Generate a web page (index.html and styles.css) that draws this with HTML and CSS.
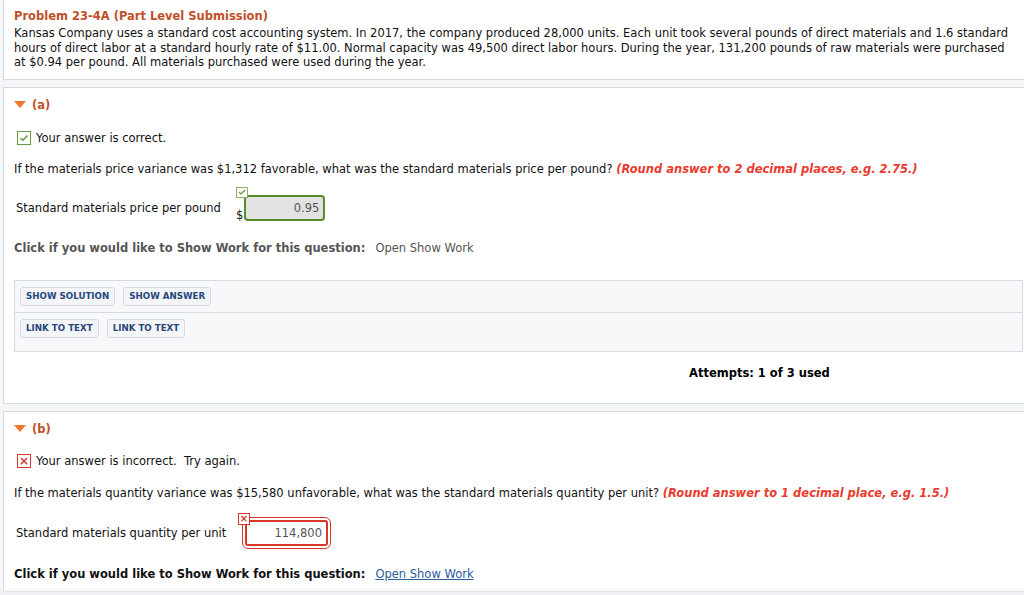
FILE: index.html
```html
<!DOCTYPE html>
<html lang="en">
<head>
    <meta charset="UTF-8">
    <title>Problem 23-4A</title>
    <link rel="stylesheet" href="styles.css">
</head>
<body>
    <div class="problem">
        <h2 class="problem-title">Problem 23-4A (Part Level Submission)</h2>
        <p class="problem-text">Kansas Company uses a standard cost accounting system. In 2017, the company produced 28,000 units. Each unit took several pounds of direct materials and 1.6 standard hours of direct labor at a standard hourly rate of $11.00. Normal capacity was 49,500 direct labor hours. During the year, 131,200 pounds of raw materials were purchased at $0.94 per pound. All materials purchased were used during the year.</p>
    </div>

    <div class="part">
        <div class="part-head"><span class="arrow"></span>(a)</div>
        <div class="status"><span class="mark mark-ok"><svg width="10" height="8" viewBox="0 0 10 8"><path d="M1.5 4.2 L3.8 6.3 L8.5 1.5" fill="none" stroke="#5c8f2e" stroke-width="1.3"/></svg></span>Your answer is correct.</div>
        <p class="question">If the materials price variance was $1,312 favorable, what was the standard materials price per pound? <em class="hint">(Round answer to 2 decimal places, e.g. 2.75.)</em></p>
        <div class="answer-row">
            <span class="answer-label">Standard materials price per pound</span>
            <span class="field">
                <span class="badge badge-ok"><svg width="8" height="6" viewBox="0 0 8 6"><path d="M1 3.2 L3 5 L7 1" fill="none" stroke="#5c8f2e" stroke-width="1.1"/></svg></span>
                <span class="dollar">$</span><span class="input input-ok">0.95</span>
            </span>
        </div>
        <div class="show-work muted">Click if you would like to Show Work for this question: <span class="work-link">Open Show Work</span></div>
        <div class="tools">
            <div class="tool-row">
                <span class="tool-btn">Show Solution</span>
                <span class="tool-btn">Show Answer</span>
            </div>
            <div class="tool-row tool-row-last">
                <span class="tool-btn">Link to Text</span>
                <span class="tool-btn">Link to Text</span>
            </div>
        </div>
        <div class="attempts">Attempts: 1 of 3 used</div>
    </div>

    <div class="part part-b">
        <div class="part-head"><span class="arrow"></span>(b)</div>
        <div class="status"><span class="mark mark-bad">&times;</span>Your answer is incorrect.&nbsp; Try again.</div>
        <p class="question">If the materials quantity variance was $15,580 unfavorable, what was the standard materials quantity per unit? <em class="hint">(Round answer to 1 decimal place, e.g. 1.5.)</em></p>
        <div class="answer-row answer-row-b">
            <span class="answer-label">Standard materials quantity per unit</span>
            <span class="field field-b">
                <span class="badge badge-bad">&times;</span>
                <span class="input input-bad">114,800</span>
            </span>
        </div>
        <div class="show-work show-work-b">Click if you would like to Show Work for this question: <a class="work-link link" href="#">Open Show Work</a></div>
    </div>
    <div class="page-fade"></div>
</body>
</html>
```

FILE: styles.css
```css
body {
    margin: 0;
    padding: 0;
    background-color: #f4f6f8;
    font-family: "DejaVu Sans", Verdana, sans-serif;
    font-size: 11.5px;
    color: #111;
    overflow: hidden;
}
.problem {
    margin-left: 3px;
    padding: 9px 10px 9px 10px;
    background-color: #fff;
    border-left: 1px solid #d3dae2;
    border-bottom: 1px solid #d3dae2;
}
.problem-title {
    margin: 0 0 3px 0;
    font-size: 11.5px;
    font-weight: bold;
    color: #c0502a;
    line-height: 14px;
}
.problem-text {
    margin: 0;
    line-height: 14.5px;
}
.part {
    margin: 7px -10px 0 3px;
    padding: 10px 10px 10px 10px;
    background-color: #fff;
    border: 1px solid #d3dae2;
}
.part-b {
    margin-top: 7px;
}
.part-head {
    display: flex;
    align-items: center;
    font-weight: bold;
    font-size: 11.5px;
    color: #c0502a;
    line-height: 14px;
}
.arrow {
    width: 0;
    height: 0;
    margin-right: 6px;
    border-left: 6.5px solid transparent;
    border-right: 6.5px solid transparent;
    border-top: 7px solid #f0782c;
}
.status {
    display: flex;
    align-items: center;
    margin-top: 19px;
    margin-left: 3px;
    line-height: 14px;
}
.part-b .status {
    margin-top: 18px;
}
.mark {
    display: flex;
    align-items: center;
    justify-content: center;
    width: 12px;
    height: 12px;
    margin-right: 5px;
    background-color: #fff;
}
.mark-ok {
    border: 1px solid #6b9a3e;
}
.mark-bad {
    border: 1px solid #d9362c;
    color: #d9362c;
    font-weight: bold;
    font-size: 12px;
    line-height: 12px;
}
.question {
    margin: 17px 0 0 0;
    line-height: 14px;
}
.part-b .question {
    margin-top: 18px;
}
.hint {
    font-weight: bold;
    color: #ea3b2e;
}
.answer-row {
    display: flex;
    align-items: center;
    margin-top: 19px;
    margin-left: 2px;
}
.answer-row-b {
    margin-top: 17px;
}
.answer-label {
    width: 220px;
}
.field {
    position: relative;
    display: flex;
    align-items: flex-end;
}
.field-b {
    margin-left: 6px;
}
.badge {
    position: absolute;
    left: 0;
    top: -8px;
    display: flex;
    align-items: center;
    justify-content: center;
    width: 10px;
    height: 9px;
    background-color: #fff;
}
.badge-ok {
    border: 1px solid #8bb064;
}
.badge-bad {
    left: -4px;
    top: -4px;
    height: 10px;
    border: 1px solid #d9362c;
    color: #d9362c;
    font-weight: bold;
    font-size: 10px;
    line-height: 10px;
}
.dollar {
    line-height: 12px;
    margin-right: 1px;
}
.input {
    display: block;
    text-align: right;
    color: #555;
    line-height: 20px;
    padding-right: 4px;
    box-sizing: border-box;
}
.input-ok {
    width: 81px;
    height: 26px;
    padding-top: 1px;
    background-color: #e2e2e2;
    border: 2px solid #5b8a2b;
    border-radius: 4px;
}
.input-bad {
    width: 83px;
    height: 26px;
    margin: 3px;
    padding-top: 1px;
    background-color: #fff;
    border: 2px solid #d9362c;
    border-radius: 3px;
    outline: 1px solid #d9362c;
    outline-offset: 2px;
}
.show-work {
    margin-top: 20px;
    font-weight: bold;
    line-height: 14px;
}
.show-work-b {
    margin-top: 18px;
}
.muted {
    color: #555;
}
.work-link {
    margin-left: 6px;
    font-weight: normal;
}
.link {
    color: #2b5a9c;
}
.tools {
    margin-top: 25px;
    background-color: #f7f8fa;
    border: 1px solid #d3dae2;
}
.tool-row {
    display: flex;
    gap: 8px;
    padding: 6px 6px 6px 5px;
    border-bottom: 1px solid #d3dae2;
}
.tool-row-last {
    border-bottom: none;
    padding-bottom: 13px;
}
.tool-btn {
    padding: 3px 5px 3px 5px;
    background-color: #f3f5f8;
    border: 1px solid #d5dbe3;
    border-radius: 3px;
    color: #27477a;
    font-size: 8.7px;
    font-weight: bold;
    text-transform: uppercase;
    line-height: 11px;
}
.attempts {
    margin: 14px 0 13px 0;
    padding-left: 675px;
    font-weight: bold;
    color: #000;
    line-height: 14px;
}
.page-fade {
    position: fixed;
    left: 0;
    right: 0;
    bottom: 0;
    height: 8px;
    background: linear-gradient(to bottom, rgba(240, 242, 245, 0), rgba(236, 238, 241, 0.9));
}
```
